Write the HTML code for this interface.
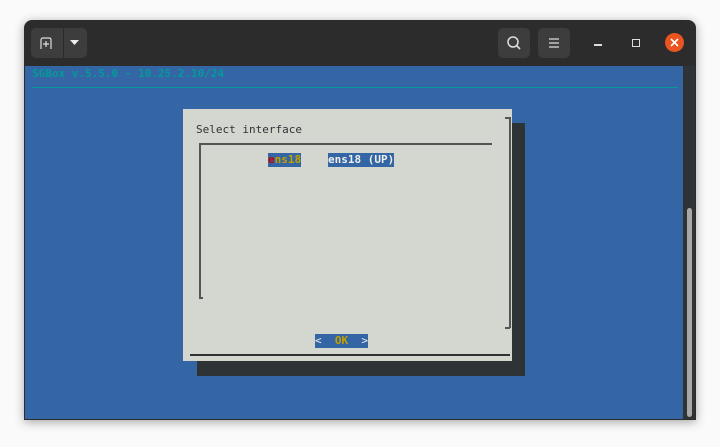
<!DOCTYPE html>
<html><head><style>
body{margin:0;width:720px;height:447px;background:#fafafa;position:relative;overflow:hidden;font-family:"DejaVu Sans Mono",monospace;}
.a{position:absolute}
.mono{font-family:"DejaVu Sans Mono","Liberation Mono",monospace;font-size:11px;line-height:14px;white-space:pre}
</style></head><body>
<div class="a" style="left:24px;top:20px;width:672px;height:400px;background:#2c2c2c;border-radius:8px 8px 0 0;box-shadow:0 2px 10px rgba(0,0,0,.35)"></div>
<div class="a" style="left:31px;top:28px;width:56px;height:30px;background:#3d3d3d;border-radius:5px"></div>
<div class="a" style="left:63px;top:28px;width:1px;height:30px;background:#2a2a2a"></div>
<svg class="a" style="left:38px;top:35px" width="18" height="16"><path d="M3 14V5Q3 3 5 3H11Q13 3 13 5V14" fill="none" stroke="#ddd" stroke-width="1.2"/><path d="M8 6V12M5 9H11" stroke="#ddd" stroke-width="1.2"/></svg>
<svg class="a" style="left:69px;top:39px" width="12" height="8"><path d="M1 1H10L5.5 6Z" fill="#eee"/></svg>
<div class="a" style="left:498px;top:28px;width:32px;height:30px;background:#3d3d3d;border-radius:5px"></div>
<svg class="a" style="left:505px;top:34px" width="18" height="18"><circle cx="8" cy="8" r="5" fill="none" stroke="#ddd" stroke-width="1.5"/><path d="M11.5 11.5L15 15" stroke="#ddd" stroke-width="1.6"/></svg>
<div class="a" style="left:538px;top:28px;width:32px;height:30px;background:#3d3d3d;border-radius:5px"></div>
<svg class="a" style="left:546px;top:36px" width="16" height="14"><path d="M3 3H13M3 7H13M3 11H13" stroke="#ddd" stroke-width="1.2"/></svg>
<div class="a" style="left:594px;top:44px;width:8px;height:1.5px;background:#ddd"></div>
<div class="a" style="left:632px;top:39px;width:6px;height:6px;border:1.3px solid #ddd"></div>
<div class="a" style="left:665px;top:33px;width:19px;height:19px;border-radius:50%;background:#e95420"></div>
<svg class="a" style="left:669px;top:37px" width="11" height="11"><path d="M2 2L9 9M9 2L2 9" stroke="#fff" stroke-width="1.6"/></svg>
<div class="a" style="left:25px;top:66px;width:658px;height:353px;background:#3465a4"></div>
<div class="a" style="left:683px;top:66px;width:12px;height:353px;background:#2e3436"></div>
<div class="a" style="left:687px;top:208px;width:5px;height:209px;background:#a8a8a8;border-radius:3px"></div>
<div class="a mono" style="left:32px;top:67px;color:#06989a;font-weight:bold">SGBox v.5.5.0 - 10.25.2.10/24</div>
<div class="a" style="left:32px;top:87px;width:646px;height:1px;background:#06989a"></div>
<div class="a" style="left:197px;top:123px;width:328px;height:253px;background:#2e3436"></div>
<div class="a" style="left:183px;top:109px;width:329px;height:252px;background:#d3d7cf"></div>
<div class="a" style="left:509px;top:117px;width:1.5px;height:211px;background:#555"></div>
<div class="a" style="left:505px;top:117px;width:5px;height:1.5px;background:#555"></div>
<div class="a" style="left:505px;top:327px;width:5px;height:1.5px;background:#555"></div>
<div class="a mono" style="left:196px;top:123px;color:#2e3436">Select interface</div>
<div class="a" style="left:199px;top:143px;width:293px;height:1.5px;background:#555"></div>
<div class="a" style="left:199px;top:143px;width:1.5px;height:156px;background:#555"></div>
<div class="a" style="left:199px;top:297px;width:4px;height:1.5px;background:#555"></div>
<div class="a mono" style="left:268px;top:153px;background:#3465a4;color:#c4a000;height:14px;font-weight:bold"><span style="color:#cc0000">e</span>ns18</div>
<div class="a mono" style="left:328px;top:153px;background:#3465a4;color:#eeeeec;height:14px;font-weight:bold">ens18 (UP)</div>
<div class="a mono" style="left:315px;top:334px;width:53px;background:#3465a4;color:#eeeeec;height:14px">&lt;  <span style="color:#c4a000;font-weight:bold">OK</span>  &gt;</div>
<div class="a" style="left:190px;top:354px;width:320px;height:1.5px;background:#2e3436"></div>
</body></html>
